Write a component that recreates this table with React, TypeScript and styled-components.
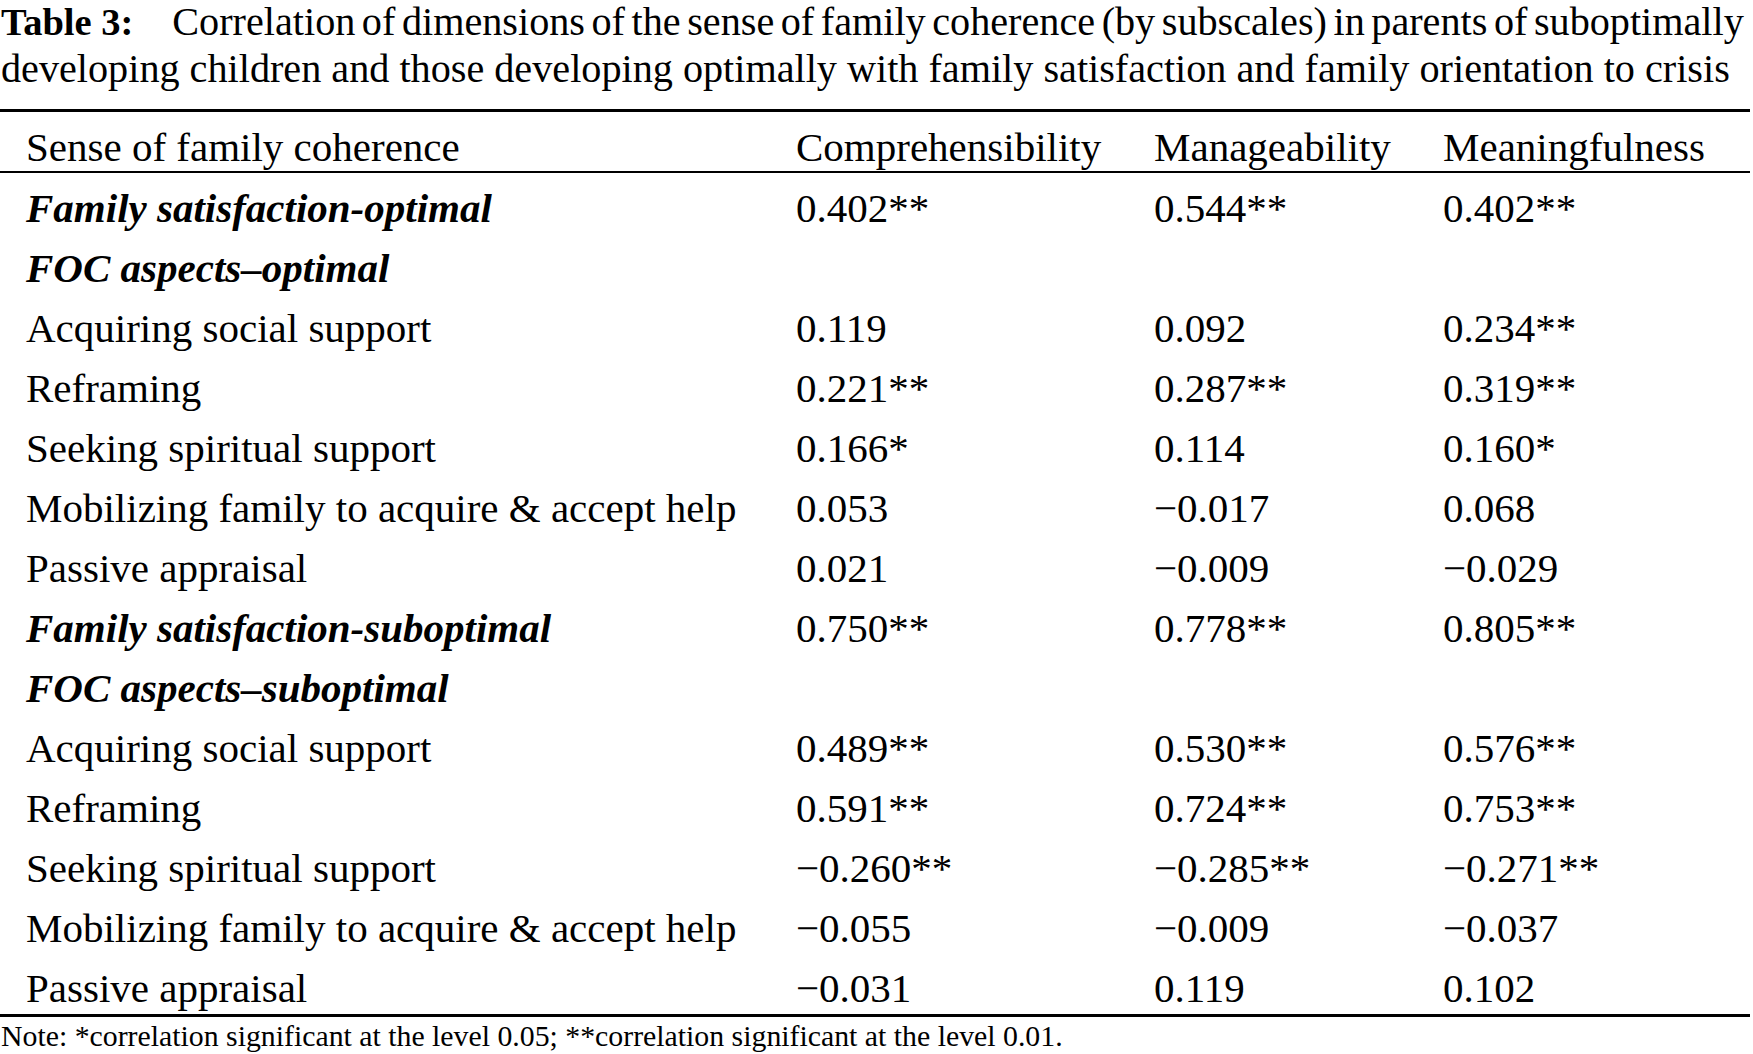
import React from "react";
import styled, { createGlobalStyle } from "styled-components";

const GlobalStyle = createGlobalStyle`
  html, body {
    margin: 0;
    padding: 0;
    background: #ffffff;
  }
  body {
    font-family: "Liberation Serif", "Times New Roman", serif;
    color: #000000;
  }
`;

const Page = styled.div`
  width: 1750px;
  overflow: hidden;
`;

const Caption = styled.div`
  font-size: 40.2px;
  line-height: 45.5px;
  padding-left: 1px;
  white-space: nowrap;
  margin-top: -1px;
  height: 92px;
  margin-bottom: 18px;
`;

const CaptionLine = styled.div<{ $tight?: boolean }>`
  word-spacing: ${(p) => (p.$tight ? "-3.5px" : "0")};
`;

const CaptionLabel = styled.span`
  font-weight: 700;
  font-size: 38.5px;
  margin-right: 39px;
  word-spacing: 0;
`;

const Table = styled.div`
  border-top: 3px solid #000;
  font-size: 41px;
`;

const HeaderRow = styled.div`
  display: grid;
  grid-template-columns: 796px 358px 289px 307px;
  padding-top: 10.5px;
  line-height: 48.5px;
  border-bottom: 2px solid #000;
  white-space: nowrap;
`;

const Body = styled.div`
  padding-top: 1px;
  border-bottom: 3px solid #000;
`;

const Row = styled.div`
  display: grid;
  grid-template-columns: 796px 358px 289px 307px;
  box-sizing: border-box;
  height: 60px;
  padding-top: 8px;
  line-height: 52px;
  white-space: nowrap;
`;

const LabelCell = styled.div<{ $section?: boolean }>`
  padding-left: 26px;
  font-weight: ${(p) => (p.$section ? 700 : 400)};
  font-style: ${(p) => (p.$section ? "italic" : "normal")};
`;

const ValueCell = styled.div``;

const Note = styled.div`
  font-size: 29.8px;
  line-height: 34px;
  padding-top: 2px;
  padding-left: 1px;
  white-space: nowrap;
`;

type RowData = { label: string; section?: boolean; values: string[] };

const rows: RowData[] = [
  { label: "Family satisfaction-optimal", section: true, values: ["0.402**", "0.544**", "0.402**"] },
  { label: "FOC aspects\u2013optimal", section: true, values: ["", "", ""] },
  { label: "Acquiring social support", values: ["0.119", "0.092", "0.234**"] },
  { label: "Reframing", values: ["0.221**", "0.287**", "0.319**"] },
  { label: "Seeking spiritual support", values: ["0.166*", "0.114", "0.160*"] },
  { label: "Mobilizing family to acquire & accept help", values: ["0.053", "\u22120.017", "0.068"] },
  { label: "Passive appraisal", values: ["0.021", "\u22120.009", "\u22120.029"] },
  { label: "Family satisfaction-suboptimal", section: true, values: ["0.750**", "0.778**", "0.805**"] },
  { label: "FOC aspects\u2013suboptimal", section: true, values: ["", "", ""] },
  { label: "Acquiring social support", values: ["0.489**", "0.530**", "0.576**"] },
  { label: "Reframing", values: ["0.591**", "0.724**", "0.753**"] },
  { label: "Seeking spiritual support", values: ["\u22120.260**", "\u22120.285**", "\u22120.271**"] },
  { label: "Mobilizing family to acquire & accept help", values: ["\u22120.055", "\u22120.009", "\u22120.037"] },
  { label: "Passive appraisal", values: ["\u22120.031", "0.119", "0.102"] },
];

export default function App() {
  return (
    <Page>
      <GlobalStyle />
      <Caption>
        <CaptionLine $tight>
          <CaptionLabel>Table 3:</CaptionLabel>
          Correlation of dimensions of the sense of family coherence (by subscales) in parents of suboptimally
        </CaptionLine>
        <CaptionLine>
          developing children and those developing optimally with family satisfaction and family orientation to crisis
        </CaptionLine>
      </Caption>
      <Table>
        <HeaderRow>
          <LabelCell>Sense of family coherence</LabelCell>
          <ValueCell>Comprehensibility</ValueCell>
          <ValueCell>Manageability</ValueCell>
          <ValueCell>Meaningfulness</ValueCell>
        </HeaderRow>
        <Body>
          {rows.map((r, i) => (
            <Row key={i}>
              <LabelCell $section={r.section}>{r.label}</LabelCell>
              {r.values.map((v, j) => (
                <ValueCell key={j}>{v}</ValueCell>
              ))}
            </Row>
          ))}
        </Body>
      </Table>
      <Note>Note: *correlation significant at the level 0.05; **correlation significant at the level 0.01.</Note>
    </Page>
  );
}
